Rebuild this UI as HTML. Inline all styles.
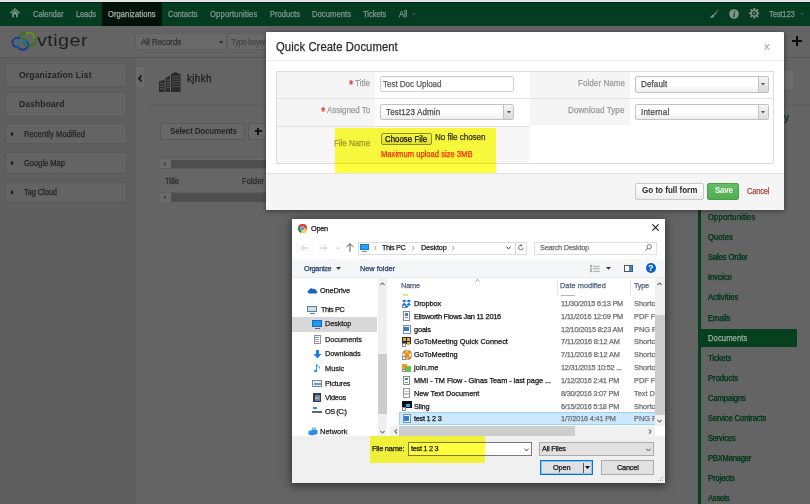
<!DOCTYPE html>
<html><head><meta charset="utf-8"><title>Quick Create Document</title>
<style>
html,body{margin:0;padding:0;}
body{width:810px;height:504px;overflow:hidden;position:relative;background:#646464;font-family:"Liberation Sans",Arial,sans-serif;}
div,span,svg{position:absolute;box-sizing:border-box;}
span{white-space:nowrap;line-height:1;-webkit-text-stroke:0.25px;transform-origin:0 0;}
#root{left:0;top:0;width:810px;height:504px;overflow:hidden;}
</style></head><body><div id="root">
<div style="left:0px;top:0px;width:810px;height:504px;background:#646464;"></div>
<div style="left:0px;top:0px;width:810px;height:2px;background:#e4e4e4;"></div>
<div style="left:0px;top:2px;width:810px;height:24px;background:#033c20;"></div>
<div style="left:0px;top:2px;width:810px;height:1px;background:#012812;"></div>
<div style="left:102px;top:2px;width:60px;height:24px;background:#01120a;"></div>
<span style="left:33.00px;top:11px;font-size:8.25px;color:#82988b;letter-spacing:-0.046px;transform:scaleX(0.92);">Calendar</span>
<span style="left:76.00px;top:11px;font-size:8.25px;color:#82988b;letter-spacing:-0.184px;transform:scaleX(0.92);">Leads</span>
<span style="left:167.50px;top:11px;font-size:8.25px;color:#82988b;letter-spacing:-0.070px;transform:scaleX(0.92);">Contacts</span>
<span style="left:210.00px;top:11px;font-size:8.25px;color:#82988b;letter-spacing:0.196px;transform:scaleX(0.92);">Opportunities</span>
<span style="left:270.00px;top:11px;font-size:8.25px;color:#82988b;letter-spacing:0.008px;transform:scaleX(0.92);">Products</span>
<span style="left:312.30px;top:11px;font-size:8.25px;color:#82988b;letter-spacing:0.084px;transform:scaleX(0.92);">Documents</span>
<span style="left:363.30px;top:11px;font-size:8.25px;color:#82988b;letter-spacing:-0.064px;transform:scaleX(0.92);">Tickets</span>
<span style="left:399.00px;top:11px;font-size:8.25px;color:#82988b;letter-spacing:-0.074px;transform:scaleX(0.92);">All</span>
<span style="left:108.00px;top:11px;font-size:8.25px;color:#a9b0ab;letter-spacing:0.061px;transform:scaleX(0.92);">Organizations</span>
<svg style="left:9.5px;top:7.5px;" width="10" height="10" viewBox="0 0 10 10"><path d="M5 1 L0.8 4.8 M5 1 L9.2 4.8" stroke="#7d9286" stroke-width="1.3" fill="none" stroke-linecap="round"/><path d="M2.2 5 L5 2.7 L7.8 5 V9.2 H6 V6.6 H4 V9.2 H2.2 Z" fill="#7d9286"/></svg>
<svg style="left:411.5px;top:13.2px;" width="4" height="2.4" viewBox="0 0 4 2.4"><path d="M0 0 H4 L2 2.4 Z" fill="#2c5a41"/></svg>
<svg style="left:709px;top:8px;" width="11" height="11" viewBox="0 0 11 11"><path d="M10 0.6 L4.6 6.4 L5.8 7.4 Z" fill="#7f9387"/><path d="M4.2 6.8 C2.6 6.6 2.6 8.6 0.8 9.6 C2.8 10.2 5 9.6 5.4 7.8 Z" fill="#7f9387"/></svg>
<svg style="left:729px;top:8.5px;" width="10" height="10" viewBox="0 0 10 10"><circle cx="5" cy="5" r="4.8" fill="#7f9387"/></svg>
<span style="left:732.60px;top:10px;font-size:9.25px;color:#033c20;font-weight:bold;-webkit-text-stroke:0;transform:scaleX(0.92);font-style:italic;font-family:'Liberation Serif',serif;">i</span>
<svg style="left:748.8px;top:8px;" width="10.6" height="10.6" viewBox="0 0 12 12"><rect x="4.9" y="0" width="2.2" height="12" rx="0.6" transform="rotate(0 6 6)" fill="#7f9387"/><rect x="4.9" y="0" width="2.2" height="12" rx="0.6" transform="rotate(45 6 6)" fill="#7f9387"/><rect x="4.9" y="0" width="2.2" height="12" rx="0.6" transform="rotate(90 6 6)" fill="#7f9387"/><rect x="4.9" y="0" width="2.2" height="12" rx="0.6" transform="rotate(135 6 6)" fill="#7f9387"/><circle cx="6" cy="6" r="4" fill="#7f9387"/><circle cx="6" cy="6" r="2.6" fill="#033c20"/><circle cx="6" cy="6" r="1.2" fill="#7f9387"/></svg>
<span style="left:769.30px;top:11px;font-size:8.25px;color:#82988b;letter-spacing:-0.160px;transform:scaleX(0.92);">Test123</span>
<svg style="left:799.5px;top:13.2px;" width="4" height="2.4" viewBox="0 0 4 2.4"><path d="M0 0 H4 L2 2.4 Z" fill="#2c5a41"/></svg>
<div style="left:0px;top:26px;width:810px;height:31.5px;background:#646464;"></div>
<div style="left:0px;top:57px;width:810px;height:1px;background:#565656;"></div>
<svg style="left:10.5px;top:31px;" width="25" height="20" viewBox="0 0 25 20"><path d="M8.6 7.6 C8 3 12.4 0.6 16 2.8 C19 0.2 24.2 2.6 23 7.6 C26 10.4 23.6 15 19.4 14 C16.6 14.4 13.4 13.4 11.6 11 C10.2 9 12.2 6.8 14.8 8.2" fill="none" stroke="#33761f" stroke-width="1.9" stroke-linecap="round"/><path d="M15.4 2.4 C18.4 0.6 23.4 2.2 23 7.2" fill="none" stroke="#6f8f1c" stroke-width="1.9" stroke-linecap="round"/><path d="M8.6 7.4 C4 5.4 -0.4 9.8 2.2 14 C3.4 15.8 5.6 16 6.8 15.6 C7.8 19.6 14.4 20 16.4 16 C17.4 14 16.8 12 15.4 10.4" fill="none" stroke="#183f88" stroke-width="1.9" stroke-linecap="round"/><path d="M6.6 15.4 C5.2 12 7.8 9 11 9.6 C13.6 10 15.8 12 16 14.4" fill="none" stroke="#2270b4" stroke-width="1.7" stroke-linecap="round"/></svg>
<span style="left:37.20px;top:32px;font-size:17px;color:#1e1e1e;letter-spacing:0.336px;transform:scaleX(1.17);-webkit-text-stroke:0;">vtiger</span>
<div style="left:135px;top:33px;width:91.5px;height:16.5px;background:#696969;border:1px solid #5d5d5d;border-radius:2px 0 0 2px;"></div>
<span style="left:140.80px;top:38px;font-size:9.0px;color:#333;letter-spacing:-0.232px;transform:scaleX(0.92);">All Records</span>
<svg style="left:218.5px;top:40.5px;" width="4.5" height="3" viewBox="0 0 4.5 3"><path d="M0 0 H4.5 L2.25 3 Z" fill="#333"/></svg>
<div style="left:226.5px;top:33px;width:60px;height:16.5px;background:#696969;border:1px solid #5d5d5d;"></div>
<span style="left:231.00px;top:38px;font-size:9.0px;color:#484848;letter-spacing:-0.627px;transform:scaleX(0.92);">Type keyw</span>
<div style="left:792px;top:39.7px;width:10px;height:2.7px;background:#0a0a0a;"></div>
<div style="left:795.6px;top:36px;width:2.7px;height:10px;background:#0a0a0a;"></div>
<div style="left:0px;top:58px;width:135.5px;height:446px;background:#5f5f5f;"></div>
<div style="left:5px;top:62.5px;width:121.5px;height:24.5px;background:#646464;border:1px solid #5a5a5a;border-radius:2px;"></div>
<div style="left:5px;top:92px;width:121.5px;height:24.5px;background:#646464;border:1px solid #5a5a5a;border-radius:2px;"></div>
<div style="left:5px;top:122.5px;width:121.5px;height:21.5px;background:#646464;border:1px solid #5a5a5a;border-radius:2px;"></div>
<div style="left:5px;top:152px;width:121.5px;height:21.5px;background:#646464;border:1px solid #5a5a5a;border-radius:2px;"></div>
<div style="left:5px;top:181.5px;width:121.5px;height:21.5px;background:#646464;border:1px solid #5a5a5a;border-radius:2px;"></div>
<span style="left:18.50px;top:71px;font-size:9.25px;color:#222;font-weight:bold;-webkit-text-stroke:0;letter-spacing:0.204px;transform:scaleX(0.92);">Organization List</span>
<span style="left:18.50px;top:100px;font-size:9.25px;color:#222;font-weight:bold;-webkit-text-stroke:0;letter-spacing:0.143px;transform:scaleX(0.92);">Dashboard</span>
<span style="left:24.00px;top:131px;font-size:8.25px;color:#262626;letter-spacing:0.046px;transform:scaleX(0.92);">Recently Modified</span>
<svg style="left:10.8px;top:131.5px;" width="3.4" height="4.4" viewBox="0 0 3.4 4.4"><path d="M0 0 L3.2 2.2 L0 4.4 Z" fill="#1c1c1c"/></svg>
<span style="left:24.00px;top:160px;font-size:8.25px;color:#262626;letter-spacing:-0.042px;transform:scaleX(0.92);">Google Map</span>
<svg style="left:10.8px;top:161.0px;" width="3.4" height="4.4" viewBox="0 0 3.4 4.4"><path d="M0 0 L3.2 2.2 L0 4.4 Z" fill="#1c1c1c"/></svg>
<span style="left:24.00px;top:189px;font-size:8.25px;color:#262626;letter-spacing:-0.160px;transform:scaleX(0.92);">Tag Cloud</span>
<svg style="left:10.8px;top:190.20000000000002px;" width="3.4" height="4.4" viewBox="0 0 3.4 4.4"><path d="M0 0 L3.2 2.2 L0 4.4 Z" fill="#1c1c1c"/></svg>
<div style="left:135.5px;top:58px;width:674.5px;height:446px;background:#646464;"></div>
<div style="left:135.5px;top:67px;width:8px;height:20px;background:#6a6a6a;"></div>
<svg style="left:137.5px;top:74.5px;" width="4" height="7" viewBox="0 0 4 7"><path d="M3.6 0.5 L0.8 3.5 L3.6 6.5" stroke="#111" stroke-width="1.6" fill="none"/></svg>
<svg style="left:159px;top:72px;" width="22" height="20" viewBox="0 0 22 20"><path d="M0 20 V9.5 L5.5 7.5 V20 Z M6.5 20 V6 L11 3.6 V20 Z M12 20 V2 L16.5 0 L21.5 2.2 V20 Z" fill="#2b2b2b"/><rect x="1.2" y="11" width="1.1" height="1.3" fill="#646464"/><rect x="1.2" y="13.5" width="1.1" height="1.3" fill="#646464"/><rect x="1.2" y="16" width="1.1" height="1.3" fill="#646464"/><rect x="3.2" y="11" width="1.1" height="1.3" fill="#646464"/><rect x="3.2" y="13.5" width="1.1" height="1.3" fill="#646464"/><rect x="3.2" y="16" width="1.1" height="1.3" fill="#646464"/><rect x="7.6" y="7.5" width="1" height="1.3" fill="#646464"/><rect x="7.6" y="10" width="1" height="1.3" fill="#646464"/><rect x="7.6" y="12.5" width="1" height="1.3" fill="#646464"/><rect x="7.6" y="15" width="1" height="1.3" fill="#646464"/><rect x="9.3" y="7.5" width="1" height="1.3" fill="#646464"/><rect x="9.3" y="10" width="1" height="1.3" fill="#646464"/><rect x="9.3" y="12.5" width="1" height="1.3" fill="#646464"/><rect x="9.3" y="15" width="1" height="1.3" fill="#646464"/><rect x="13.4" y="4" width="1" height="1.3" fill="#646464"/><rect x="13.4" y="6.5" width="1" height="1.3" fill="#646464"/><rect x="13.4" y="9" width="1" height="1.3" fill="#646464"/><rect x="13.4" y="11.5" width="1" height="1.3" fill="#646464"/><rect x="13.4" y="14" width="1" height="1.3" fill="#646464"/><rect x="15.4" y="4" width="1" height="1.3" fill="#646464"/><rect x="15.4" y="6.5" width="1" height="1.3" fill="#646464"/><rect x="15.4" y="9" width="1" height="1.3" fill="#646464"/><rect x="15.4" y="11.5" width="1" height="1.3" fill="#646464"/><rect x="15.4" y="14" width="1" height="1.3" fill="#646464"/><rect x="17.4" y="4" width="1" height="1.3" fill="#646464"/><rect x="17.4" y="6.5" width="1" height="1.3" fill="#646464"/><rect x="17.4" y="9" width="1" height="1.3" fill="#646464"/><rect x="17.4" y="11.5" width="1" height="1.3" fill="#646464"/><rect x="17.4" y="14" width="1" height="1.3" fill="#646464"/><rect x="19.4" y="4" width="1" height="1.3" fill="#646464"/><rect x="19.4" y="6.5" width="1" height="1.3" fill="#646464"/><rect x="19.4" y="9" width="1" height="1.3" fill="#646464"/><rect x="19.4" y="11.5" width="1" height="1.3" fill="#646464"/><rect x="19.4" y="14" width="1" height="1.3" fill="#646464"/></svg>
<span style="left:186.80px;top:73px;font-size:10.75px;color:#1a1a1a;letter-spacing:0.384px;transform:scaleX(0.92);">kjhkh</span>
<div style="left:150px;top:104.5px;width:660px;height:1px;background:#5c5c5c;"></div>
<div style="left:160px;top:123px;width:84.5px;height:16.5px;background:#686868;border:1px solid #585858;border-radius:2px;"></div>
<span style="left:170.00px;top:127px;font-size:8.75px;color:#262626;font-weight:bold;-webkit-text-stroke:0;letter-spacing:-0.195px;transform:scaleX(0.92);">Select Documents</span>
<div style="left:247.5px;top:123px;width:30px;height:16.5px;background:#686868;border:1px solid #585858;border-radius:2px;"></div>
<div style="left:254.6px;top:130.1px;width:7.4px;height:2px;background:#111;"></div>
<div style="left:257.3px;top:127.6px;width:2px;height:7px;background:#111;"></div>
<div style="left:160px;top:159.3px;width:200px;height:8.7px;background:#6b6b6b;"></div>
<div style="left:170.5px;top:159.5px;width:180px;height:8.5px;background:#4f4f4f;"></div>
<svg style="left:162.5px;top:161.8px;" width="3" height="4" viewBox="0 0 3 4"><path d="M3 0 L0 2 L3 4 Z" fill="#444"/></svg>
<div style="left:160px;top:168px;width:200px;height:25px;background:#666;border:1px solid #5e5e5e;border-left:none;border-right:none;"></div>
<span style="left:165.00px;top:178px;font-size:8.25px;color:#2a2a2a;letter-spacing:-0.015px;transform:scaleX(0.92);">Title</span>
<span style="left:241.50px;top:178px;font-size:8.25px;color:#2a2a2a;letter-spacing:0.106px;transform:scaleX(0.92);">Folder</span>
<div style="left:160px;top:193px;width:200px;height:8.7px;background:#6b6b6b;"></div>
<div style="left:170.5px;top:193px;width:180px;height:8.5px;background:#4f4f4f;"></div>
<svg style="left:162.5px;top:195.4px;" width="3" height="4" viewBox="0 0 3 4"><path d="M3 0 L0 2 L3 4 Z" fill="#444"/></svg>
<div style="left:784px;top:71px;width:9px;height:17.5px;background:#6c6c6c;"></div>
<div style="left:784px;top:105px;width:26px;height:1px;background:#5c5c5c;"></div>
<span style="left:784.30px;top:113px;font-size:10.25px;color:#04421f;font-weight:bold;-webkit-text-stroke:0;transform:scaleX(0.92);">y</span>
<div style="left:698.2px;top:205px;width:2.8px;height:299px;background:#05401f;"></div>
<div style="left:700.9px;top:328.7px;width:96px;height:18px;background:#05401f;"></div>
<span style="left:707.70px;top:214px;font-size:8.25px;color:#063d1e;letter-spacing:0.196px;transform:scaleX(0.92);text-shadow:0 0 0.4px #063d1e;">Opportunities</span>
<span style="left:707.70px;top:234px;font-size:8.25px;color:#063d1e;letter-spacing:0.072px;transform:scaleX(0.92);text-shadow:0 0 0.4px #063d1e;">Quotes</span>
<span style="left:707.70px;top:254px;font-size:8.25px;color:#063d1e;letter-spacing:-0.097px;transform:scaleX(0.92);text-shadow:0 0 0.4px #063d1e;">Sales Order</span>
<span style="left:707.70px;top:274px;font-size:8.25px;color:#063d1e;letter-spacing:-0.027px;transform:scaleX(0.92);text-shadow:0 0 0.4px #063d1e;">Invoice</span>
<span style="left:707.70px;top:294px;font-size:8.25px;color:#063d1e;letter-spacing:0.043px;transform:scaleX(0.92);text-shadow:0 0 0.4px #063d1e;">Activities</span>
<span style="left:707.70px;top:315px;font-size:8.25px;color:#063d1e;letter-spacing:-0.103px;transform:scaleX(0.92);text-shadow:0 0 0.4px #063d1e;">Emails</span>
<span style="left:707.70px;top:335px;font-size:8.25px;color:#9fb0a6;letter-spacing:0.124px;transform:scaleX(0.92);">Documents</span>
<span style="left:707.70px;top:355px;font-size:8.25px;color:#063d1e;letter-spacing:-0.083px;transform:scaleX(0.92);text-shadow:0 0 0.4px #063d1e;">Tickets</span>
<span style="left:707.70px;top:375px;font-size:8.25px;color:#063d1e;letter-spacing:0.023px;transform:scaleX(0.92);text-shadow:0 0 0.4px #063d1e;">Products</span>
<span style="left:707.70px;top:395px;font-size:8.25px;color:#063d1e;letter-spacing:-0.066px;transform:scaleX(0.92);text-shadow:0 0 0.4px #063d1e;">Campaigns</span>
<span style="left:707.70px;top:415px;font-size:8.25px;color:#063d1e;letter-spacing:-0.108px;transform:scaleX(0.92);text-shadow:0 0 0.4px #063d1e;">Service Contracts</span>
<span style="left:707.70px;top:435px;font-size:8.25px;color:#063d1e;letter-spacing:-0.249px;transform:scaleX(0.92);text-shadow:0 0 0.4px #063d1e;">Services</span>
<span style="left:707.70px;top:455px;font-size:8.25px;color:#063d1e;letter-spacing:-0.222px;transform:scaleX(0.92);text-shadow:0 0 0.4px #063d1e;">PBXManager</span>
<span style="left:707.70px;top:475px;font-size:8.25px;color:#063d1e;letter-spacing:-0.096px;transform:scaleX(0.92);text-shadow:0 0 0.4px #063d1e;">Projects</span>
<span style="left:707.70px;top:495px;font-size:8.25px;color:#063d1e;letter-spacing:-0.256px;transform:scaleX(0.92);text-shadow:0 0 0.4px #063d1e;">Assets</span>
<div style="left:266px;top:32.3px;width:517.7px;height:177.7px;background:#fff;box-shadow:0 1px 5px rgba(0,0,0,0.45);border-radius:1px;"></div>
<span style="left:275.80px;top:41px;font-size:12.25px;color:#2c2c2c;letter-spacing:0.079px;transform:scaleX(0.92);">Quick Create Document</span>
<span style="left:764.00px;top:41px;font-size:11.5px;color:#b5b5b5;font-weight:bold;-webkit-text-stroke:0;transform:scaleX(0.92);">x</span>
<div style="left:266px;top:60px;width:517.7px;height:1px;background:#e9e9e9;"></div>
<div style="left:266px;top:173px;width:517.7px;height:37px;background:#f5f5f5;border-top:1px solid #e2e2e2;"></div>
<div style="left:275.5px;top:70.5px;width:498.8px;height:93.3px;background:#fff;border:1px solid #dddddd;"></div>
<div style="left:276.5px;top:71.5px;width:98.5px;height:26.5px;background:#f5f5f5;"></div>
<div style="left:276.5px;top:99px;width:98.5px;height:26.5px;background:#f5f5f5;"></div>
<div style="left:276.5px;top:126.5px;width:253.5px;height:36.3px;background:#f7f7f7;"></div>
<div style="left:530px;top:71.5px;width:100px;height:26.5px;background:#f5f5f5;"></div>
<div style="left:530px;top:99px;width:100px;height:26px;background:#f5f5f5;"></div>
<div style="left:276.5px;top:98px;width:496.8px;height:1px;background:#e2e2e2;"></div>
<div style="left:276.5px;top:125.5px;width:253.5px;height:1px;background:#e2e2e2;"></div>
<span style="left:348.60px;top:79px;font-size:12.0px;color:#e8262c;transform:scaleX(0.92);">*</span>
<span style="left:355.00px;top:79px;font-size:8.75px;color:#9a9a9a;letter-spacing:0.025px;transform:scaleX(0.92);">Title</span>
<span style="left:320.60px;top:106px;font-size:12.0px;color:#e8262c;transform:scaleX(0.92);">*</span>
<span style="left:326.80px;top:106px;font-size:8.75px;color:#9a9a9a;letter-spacing:-0.055px;transform:scaleX(0.92);">Assigned To</span>
<span style="left:333.80px;top:139px;font-size:8.75px;color:#9a9a9a;letter-spacing:-0.065px;transform:scaleX(0.92);">File Name</span>
<span style="left:577.80px;top:79px;font-size:8.75px;color:#9a9a9a;letter-spacing:0.052px;transform:scaleX(0.92);">Folder Name</span>
<span style="left:568.40px;top:106px;font-size:8.75px;color:#9a9a9a;letter-spacing:0.096px;transform:scaleX(0.92);">Download Type</span>
<div style="left:380px;top:76.2px;width:134.3px;height:16.2px;background:#fff;border:1px solid #d2d2d2;border-radius:2px;box-shadow:inset 0 1px 1px rgba(0,0,0,0.06);"></div>
<span style="left:383.30px;top:80px;font-size:8.75px;color:#5a5a5a;letter-spacing:-0.043px;transform:scaleX(0.92);">Test Doc Upload</span>
<div style="left:380px;top:103.5px;width:134.3px;height:16.3px;border:1px solid #c2c2c2;border-radius:2px;background:linear-gradient(#fff 0%,#fff 50%,#eeeeee 100%);"></div>
<div style="left:503.09999999999997px;top:104.5px;width:10.2px;height:14.3px;border-left:1px solid #c2c2c2;background:linear-gradient(#f4f4f4,#dadada);border-radius:0 2px 2px 0;"></div>
<svg style="left:506.69999999999993px;top:110.65px;" width="4" height="3" viewBox="0 0 4 3"><path d="M0 0 H4 L2 2.6 Z" fill="#555"/></svg>
<span style="left:385.80px;top:108px;font-size:8.75px;color:#4a4a4a;letter-spacing:0.127px;transform:scaleX(0.92);">Test123 Admin</span>
<div style="left:634.5px;top:76px;width:134.3px;height:16.5px;border:1px solid #c2c2c2;border-radius:2px;background:linear-gradient(#fff 0%,#fff 50%,#eeeeee 100%);"></div>
<div style="left:757.5999999999999px;top:77px;width:10.2px;height:14.5px;border-left:1px solid #c2c2c2;background:linear-gradient(#f4f4f4,#dadada);border-radius:0 2px 2px 0;"></div>
<svg style="left:761.1999999999999px;top:83.25px;" width="4" height="3" viewBox="0 0 4 3"><path d="M0 0 H4 L2 2.6 Z" fill="#555"/></svg>
<span style="left:640.80px;top:80px;font-size:8.75px;color:#4a4a4a;letter-spacing:0.126px;transform:scaleX(0.92);">Default</span>
<div style="left:634.5px;top:103.5px;width:134.3px;height:16.5px;border:1px solid #c2c2c2;border-radius:2px;background:linear-gradient(#fff 0%,#fff 50%,#eeeeee 100%);"></div>
<div style="left:757.5999999999999px;top:104.5px;width:10.2px;height:14.5px;border-left:1px solid #c2c2c2;background:linear-gradient(#f4f4f4,#dadada);border-radius:0 2px 2px 0;"></div>
<svg style="left:761.1999999999999px;top:110.75px;" width="4" height="3" viewBox="0 0 4 3"><path d="M0 0 H4 L2 2.6 Z" fill="#555"/></svg>
<span style="left:640.80px;top:108px;font-size:8.75px;color:#4a4a4a;letter-spacing:0.210px;transform:scaleX(0.92);">Internal</span>
<div style="left:380.5px;top:132.6px;width:51.3px;height:12.8px;border:1px solid #8a8a8a;border-radius:2px;background:linear-gradient(#f6f6f6,#dedede);"></div>
<span style="left:385.20px;top:135px;font-size:8.5px;color:#111;letter-spacing:0.041px;transform:scaleX(0.92);">Choose File</span>
<span style="left:434.50px;top:133px;font-size:8.75px;color:#333;letter-spacing:-0.043px;transform:scaleX(0.92);">No file chosen</span>
<span style="left:380.50px;top:151px;font-size:8.25px;color:#ff2a10;letter-spacing:0.019px;transform:scaleX(0.92);">Maximum upload size 3MB</span>
<div style="left:635.3px;top:182.8px;width:69px;height:16.8px;border:1px solid #c9c9c9;border-radius:2px;background:linear-gradient(#fff,#ececec);"></div>
<span style="left:642.00px;top:186px;font-size:8.75px;color:#2b2b2b;font-weight:bold;-webkit-text-stroke:0;letter-spacing:-0.003px;transform:scaleX(0.92);">Go to full form</span>
<div style="left:707.3px;top:182.8px;width:31.8px;height:16.8px;border:1px solid #4a9f4a;border-radius:2px;background:linear-gradient(#62c062,#50ad50);"></div>
<span style="left:714.70px;top:186px;font-size:8.5px;color:#fff;font-weight:bold;-webkit-text-stroke:0;letter-spacing:-0.167px;transform:scaleX(0.92);">Save</span>
<span style="left:746.90px;top:188px;font-size:8.25px;color:#b3413f;letter-spacing:-0.245px;transform:scaleX(0.92);">Cancel</span>
<div style="left:292.4px;top:219px;width:372.4px;height:263.7px;background:#fff;box-shadow:0 2px 9px 1px rgba(0,0,0,0.5);"></div>
<div style="left:292.4px;top:435.8px;width:372.4px;height:46.89999999999998px;background:#f0f0f0;"></div>
<svg style="left:298px;top:223.8px;" width="9" height="9" viewBox="0 0 9 9"><circle cx="4.5" cy="4.5" r="4.5" fill="#db4437"/><path d="M4.5 4.5 L0.6 2.2 A4.5 4.5 0 0 0 2.9 8.7 Z" fill="#0f9d58"/><path d="M4.5 4.5 L2.9 8.7 A4.5 4.5 0 0 0 9 4.5 Z" fill="#ffcd40"/><path d="M4.5 4.5 L9 4.5 A4.5 4.5 0 0 0 0.6 2.2 Z" fill="#db4437"/><circle cx="4.5" cy="4.5" r="2.1" fill="#fff"/><circle cx="4.5" cy="4.5" r="1.6" fill="#4285f4"/></svg>
<span style="left:310.80px;top:225px;font-size:8.0px;color:#111;letter-spacing:-0.291px;transform:scaleX(0.92);">Open</span>
<svg style="left:652px;top:224.2px;" width="7" height="7" viewBox="0 0 7 7"><path d="M0.4 0.4 L6.6 6.6 M6.6 0.4 L0.4 6.6" stroke="#1a1a1a" stroke-width="1.1"/></svg>
<svg style="left:300.5px;top:245px;" width="8" height="6" viewBox="0 0 8 6"><path d="M3.2 0.4 L0.6 3 L3.2 5.6 M0.6 3 H7.6" stroke="#c4c4c4" stroke-width="0.9" fill="none"/></svg>
<svg style="left:318.5px;top:245px;" width="8" height="6" viewBox="0 0 8 6"><path d="M4.8 0.4 L7.4 3 L4.8 5.6 M7.4 3 H0.4" stroke="#c4c4c4" stroke-width="0.9" fill="none"/></svg>
<svg style="left:335.5px;top:246.8px;" width="4" height="3" viewBox="0 0 4 3"><path d="M0.3 0.4 L2 2.2 L3.7 0.4" stroke="#bbb" stroke-width="0.8" fill="none"/></svg>
<svg style="left:346px;top:243px;" width="8" height="9" viewBox="0 0 8 9"><path d="M0.6 4 L4 0.7 L7.4 4 M4 0.7 V8.8" stroke="#555" stroke-width="1" fill="none"/></svg>
<div style="left:357.5px;top:241.5px;width:169px;height:13px;background:#fff;border:1px solid #dcdcdc;"></div>
<div style="left:514.5px;top:241.5px;width:1px;height:13px;background:#d9d9d9;"></div>
<div style="left:359.5px;top:243.8px;width:9.2px;height:6.6px;background:#2a9df4;border:1px solid #1679c9;"></div>
<div style="left:361.5px;top:251px;width:5.2px;height:0.9px;background:#7d8a96;"></div>
<svg style="left:373.5px;top:246.0px;" width="3" height="5" viewBox="0 0 3 5"><path d="M0.4 0.4 L2.2 2.1 L0.4 3.8" stroke="#777" stroke-width="0.8" fill="none"/></svg>
<svg style="left:412.3px;top:246.0px;" width="3" height="5" viewBox="0 0 3 5"><path d="M0.4 0.4 L2.2 2.1 L0.4 3.8" stroke="#777" stroke-width="0.8" fill="none"/></svg>
<svg style="left:452.3px;top:246.0px;" width="3" height="5" viewBox="0 0 3 5"><path d="M0.4 0.4 L2.2 2.1 L0.4 3.8" stroke="#777" stroke-width="0.8" fill="none"/></svg>
<span style="left:382.00px;top:244px;font-size:8.0px;color:#222;letter-spacing:-0.430px;transform:scaleX(0.92);">This PC</span>
<span style="left:420.50px;top:244px;font-size:8.0px;color:#222;letter-spacing:-0.217px;transform:scaleX(0.92);">Desktop</span>
<svg style="left:505.5px;top:246px;" width="5" height="4" viewBox="0 0 5 4"><path d="M0.4 0.5 L2.5 3 L4.6 0.5" stroke="#444" stroke-width="1" fill="none"/></svg>
<svg style="left:517.5px;top:244.3px;" width="6" height="7" viewBox="0 0 6 7"><path d="M5.2 3.6 A2.3 2.3 0 1 1 3.6 1.4" stroke="#555" stroke-width="0.8" fill="none"/><path d="M2.6 0 L4.6 1.3 L2.8 2.8 Z" fill="#555"/></svg>
<div style="left:534.3px;top:241.5px;width:122.4px;height:13px;background:#fff;border:1px solid #e0e0e0;"></div>
<span style="left:539.50px;top:244px;font-size:8.0px;color:#707070;letter-spacing:-0.264px;transform:scaleX(0.92);">Search Desktop</span>
<svg style="left:645px;top:244.4px;" width="7" height="7" viewBox="0 0 7 7"><circle cx="4.2" cy="2.8" r="2.2" stroke="#555" stroke-width="0.8" fill="none"/><path d="M2.6 4.4 L0.5 6.5" stroke="#555" stroke-width="1"/></svg>
<div style="left:292.4px;top:259.3px;width:372.4px;height:18px;background:#f5f6f7;"></div>
<div style="left:292.4px;top:277.3px;width:372.4px;height:0.7px;background:#eaebec;"></div>
<span style="left:304.30px;top:265px;font-size:8.0px;color:#1f3a6b;letter-spacing:-0.336px;transform:scaleX(0.92);">Organize</span>
<svg style="left:335.6px;top:267.3px;" width="5" height="3" viewBox="0 0 5 3"><path d="M0 0 H5 L2.5 2.8 Z" fill="#333"/></svg>
<span style="left:359.50px;top:265px;font-size:8.0px;color:#1f3a6b;letter-spacing:-0.021px;transform:scaleX(0.92);">New folder</span>
<svg style="left:590px;top:264.5px;" width="10" height="8" viewBox="0 0 10 8"><rect x="0.3" y="0.5" width="1.6" height="1.4" fill="none" stroke="#777" stroke-width="0.4"/><rect x="3.2" y="0.9" width="6.5" height="0.7" fill="#888"/><rect x="0.3" y="3" width="1.6" height="1.4" fill="none" stroke="#777" stroke-width="0.4"/><rect x="3.2" y="3.4" width="6.5" height="0.7" fill="#888"/><rect x="0.3" y="5.5" width="1.6" height="1.4" fill="none" stroke="#777" stroke-width="0.4"/><rect x="3.2" y="5.9" width="6.5" height="0.7" fill="#888"/></svg>
<svg style="left:606px;top:267.3px;" width="5" height="3" viewBox="0 0 5 3"><path d="M0 0 H5 L2.5 2.8 Z" fill="#333"/></svg>
<div style="left:623.5px;top:264.6px;width:9.8px;height:7px;background:#fff;border:1px solid #555;"></div>
<div style="left:629px;top:265.6px;width:3.3px;height:5px;background:#2a8de0;"></div>
<svg style="left:645.6px;top:263px;" width="10" height="10" viewBox="0 0 10 10"><circle cx="5" cy="5" r="5" fill="#0f5fc4"/></svg>
<span style="left:648.20px;top:263px;font-size:9.75px;color:#fff;font-weight:bold;-webkit-text-stroke:0;transform:scaleX(0.92);">?</span>
<div style="left:292.4px;top:317px;width:85px;height:15px;background:#d9d9d9;"></div>
<span style="left:320.00px;top:287px;font-size:8.0px;color:#1a1a1a;letter-spacing:-0.168px;transform:scaleX(0.92);">OneDrive</span>
<span style="left:320.50px;top:306px;font-size:8.0px;color:#1a1a1a;letter-spacing:-0.430px;transform:scaleX(0.92);">This PC</span>
<span style="left:325.00px;top:320px;font-size:8.0px;color:#1a1a1a;letter-spacing:-0.127px;transform:scaleX(0.92);">Desktop</span>
<span style="left:325.00px;top:336px;font-size:8.0px;color:#1a1a1a;letter-spacing:-0.030px;transform:scaleX(0.92);">Documents</span>
<span style="left:325.00px;top:350px;font-size:8.0px;color:#1a1a1a;letter-spacing:-0.083px;transform:scaleX(0.92);">Downloads</span>
<span style="left:325.00px;top:365px;font-size:8.0px;color:#1a1a1a;letter-spacing:0.022px;transform:scaleX(0.92);">Music</span>
<span style="left:325.00px;top:380px;font-size:8.0px;color:#1a1a1a;letter-spacing:-0.169px;transform:scaleX(0.92);">Pictures</span>
<span style="left:325.00px;top:394px;font-size:8.0px;color:#1a1a1a;letter-spacing:-0.233px;transform:scaleX(0.92);">Videos</span>
<span style="left:325.00px;top:408px;font-size:8.0px;color:#1a1a1a;letter-spacing:-0.533px;transform:scaleX(0.92);">OS (C:)</span>
<span style="left:320.00px;top:428px;font-size:8.0px;color:#1a1a1a;letter-spacing:0.092px;transform:scaleX(0.92);">Network</span>
<svg style="left:307px;top:287px;" width="11" height="7" viewBox="0 0 11 7"><path d="M2.6 6.4 C0 6.4 0 3.4 2.2 3.2 C2.4 1.2 5 0.6 6 2.2 C7 1.4 8.8 2 8.8 3.6 C10.8 3.6 10.8 6.4 9 6.4 Z" fill="#1666c0"/></svg>
<div style="left:307.3px;top:305.6px;width:9.4px;height:6.2px;background:#bfe3fb;border:1px solid #6a7a86;"></div>
<div style="left:309.5px;top:312.6px;width:5px;height:0.9px;background:#6a7a86;"></div>
<div style="left:312px;top:320.3px;width:10px;height:7px;background:#1e98f2;border:1px solid #0f6cc0;"></div>
<div style="left:314.5px;top:327.8px;width:5px;height:0.8px;background:#5a6a76;"></div>
<div style="left:313.5px;top:335px;width:7px;height:8.6px;background:#fff;border:1px solid #8a949c;"></div>
<div style="left:315px;top:337px;width:4px;height:0.8px;background:#5b9bd5;"></div>
<div style="left:315px;top:339px;width:4px;height:0.6px;background:#aaa;"></div>
<div style="left:315px;top:340.6px;width:4px;height:0.6px;background:#aaa;"></div>
<svg style="left:312.5px;top:349.5px;" width="9" height="9" viewBox="0 0 9 9"><path d="M3 0 H6 V4 H8.6 L4.5 8.6 L0.4 4 H3 Z" fill="#1e7fe0"/></svg>
<svg style="left:314px;top:363.5px;" width="7" height="9" viewBox="0 0 7 9"><path d="M2.6 0.3 V6.6" stroke="#1e8fe8" stroke-width="1"/><path d="M2.6 0.3 C3.4 2 5.8 2 5.6 4.4" stroke="#1e8fe8" stroke-width="1" fill="none"/><ellipse cx="1.7" cy="7" rx="1.6" ry="1.2" fill="#1e8fe8"/></svg>
<div style="left:312.3px;top:379.5px;width:9.6px;height:7px;background:#e6eef5;border:1px solid #7d8994;"></div>
<div style="left:313.6px;top:382.6px;width:7px;height:2.6px;background:#5aa2d8;"></div>
<div style="left:313px;top:393.2px;width:8.4px;height:9px;background:#3b3b3b;"></div>
<div style="left:314.6px;top:394.6px;width:5.2px;height:6.2px;background:#4a8ad8;"></div>
<div style="left:315.4px;top:397px;width:3.4px;height:2.4px;background:#e0a040;"></div>
<div style="left:312.3px;top:410.8px;width:9.4px;height:2.6px;background:#9aa4ac;border:1px solid #5e6870;"></div>
<div style="left:313.4px;top:406.5px;width:3.4px;height:2.8px;background:#1e98f2;"></div>
<svg style="left:308px;top:427px;" width="10" height="9" viewBox="0 0 10 9"><path d="M0.5 4 L6 2.4 L9.5 3.2 V7 L4 8.6 L0.5 7.6 Z" fill="#2a8fe4"/><path d="M4 0.5 H8 V3 H4 Z" fill="#7cc0f4"/></svg>
<div style="left:378px;top:278px;width:9.2px;height:157.8px;background:#f0f0f0;"></div>
<div style="left:378px;top:353.8px;width:9.2px;height:60.5px;background:#cdcdcd;"></div>
<svg style="left:380px;top:281.5px;" width="5" height="4" viewBox="0 0 5 4"><path d="M0.4 3.2 L2.5 0.8 L4.6 3.2" stroke="#444" stroke-width="1" fill="none"/></svg>
<svg style="left:380px;top:429.5px;" width="5" height="4" viewBox="0 0 5 4"><path d="M0.4 0.8 L2.5 3.2 L4.6 0.8" stroke="#444" stroke-width="1" fill="none"/></svg>
<span style="left:400.80px;top:282px;font-size:8.0px;color:#4c607a;letter-spacing:-0.156px;transform:scaleX(0.92);">Name</span>
<span style="left:560.20px;top:282px;font-size:8.0px;color:#4c607a;letter-spacing:0.036px;transform:scaleX(0.92);">Date modified</span>
<span style="left:633.90px;top:282px;font-size:8.0px;color:#4c607a;letter-spacing:-0.310px;transform:scaleX(0.92);">Type</span>
<div style="left:556.9px;top:280px;width:0.8px;height:15px;background:#e5e5e5;"></div>
<div style="left:630px;top:280px;width:0.8px;height:15px;background:#e5e5e5;"></div>
<svg style="left:474.5px;top:278.6px;" width="5" height="3" viewBox="0 0 5 3"><path d="M0.4 2.6 L2.5 0.5 L4.6 2.6" stroke="#777" stroke-width="0.7" fill="none"/></svg>
<div style="left:398.8px;top:412.2px;width:255.8px;height:13.2px;background:#cce8ff;border:1px solid #99d1ff;border-right:none;"></div>
<span style="left:413.60px;top:300px;font-size:8.0px;color:#111;letter-spacing:-0.112px;transform:scaleX(0.92);">Dropbox</span>
<span style="left:560.60px;top:300px;font-size:8.0px;color:#6d6d6d;letter-spacing:-0.226px;transform:scaleX(0.92);">11/30/2015 6:13 PM</span>
<span style="left:633.90px;top:300px;font-size:8.0px;color:#6d6d6d;transform:scaleX(0.92);">Shortc</span>
<svg style="left:402px;top:298.59999999999997px;" width="9" height="10" viewBox="0 0 9 10"><path d="M2.2 0.4 L4.5 2 L2.2 3.6 L0 2 Z M6.8 0.4 L9 2 L6.8 3.6 L4.5 2 Z M2.2 3.8 L4.5 5.4 L2.2 7 L0 5.4 Z M6.8 3.8 L9 5.4 L6.8 7 L4.5 5.4 Z M4.5 6 L6.6 7.6 L4.5 9.2 L2.4 7.6 Z" fill="#1e78e0"/></svg>
<div style="left:402px;top:304.59999999999997px;width:3.6px;height:3.6px;background:#fff;border:0.5px solid #88a;"></div>
<span style="left:413.60px;top:313px;font-size:8.0px;color:#111;letter-spacing:-0.248px;transform:scaleX(0.92);">Ellsworth Flows Jan 11 2016</span>
<span style="left:560.60px;top:313px;font-size:8.0px;color:#6d6d6d;letter-spacing:-0.226px;transform:scaleX(0.92);">1/11/2016 12:09 PM</span>
<span style="left:633.90px;top:313px;font-size:8.0px;color:#6d6d6d;transform:scaleX(0.92);">PDF Fi</span>
<div style="left:403px;top:311.42999999999995px;width:7px;height:9.4px;background:#fff;border:1px solid #8a8a8a;"></div>
<div style="left:404.6px;top:313.42999999999995px;width:3.6px;height:2.6px;background:#3a7fc8;"></div>
<div style="left:404.6px;top:317.42999999999995px;width:3.6px;height:0.8px;background:#888;"></div>
<span style="left:413.60px;top:326px;font-size:8.0px;color:#111;letter-spacing:-0.161px;transform:scaleX(0.92);">goals</span>
<span style="left:560.60px;top:326px;font-size:8.0px;color:#6d6d6d;letter-spacing:-0.222px;transform:scaleX(0.92);">12/10/2015 8:23 AM</span>
<span style="left:633.90px;top:326px;font-size:8.0px;color:#6d6d6d;transform:scaleX(0.92);">PNG F</span>
<div style="left:402.6px;top:324.65999999999997px;width:8px;height:9px;background:#fff;border:1px solid #7a8fa8;"></div>
<div style="left:404.2px;top:326.65999999999997px;width:4.8px;height:4.2px;background:#2a7fd8;"></div>
<span style="left:413.60px;top:338px;font-size:8.0px;color:#111;letter-spacing:-0.008px;transform:scaleX(0.92);">GoToMeeting Quick Connect</span>
<span style="left:560.60px;top:338px;font-size:8.0px;color:#6d6d6d;letter-spacing:-0.166px;transform:scaleX(0.92);">7/11/2016 8:12 AM</span>
<span style="left:633.90px;top:338px;font-size:8.0px;color:#6d6d6d;transform:scaleX(0.92);">Shortc</span>
<div style="left:402px;top:337.09px;width:9.4px;height:7.25px;background:#1d2a5a;"></div>
<div style="left:403.2px;top:338.09px;width:3px;height:3px;background:#f2a81e;"></div>
<div style="left:407px;top:338.09px;width:3px;height:3px;background:#f2a81e;"></div>
<div style="left:407px;top:342.09px;width:3px;height:3px;background:#f2a81e;"></div>
<div style="left:402px;top:343.09px;width:3.6px;height:3.6px;background:#fff;border:0.5px solid #88a;"></div>
<span style="left:413.60px;top:351px;font-size:8.0px;color:#111;letter-spacing:-0.019px;transform:scaleX(0.92);">GoToMeeting</span>
<span style="left:560.60px;top:351px;font-size:8.0px;color:#6d6d6d;letter-spacing:-0.166px;transform:scaleX(0.92);">7/11/2016 8:12 AM</span>
<span style="left:633.90px;top:351px;font-size:8.0px;color:#6d6d6d;transform:scaleX(0.92);">Shortc</span>
<svg style="left:402px;top:349.91999999999996px;" width="10" height="10" viewBox="0 0 10 10"><circle cx="3" cy="2.6" r="2" fill="#f0a020"/><circle cx="7" cy="2.6" r="2" fill="#f0a020"/><circle cx="5" cy="5.2" r="2" fill="#e08a10"/><circle cx="3" cy="7.6" r="2" fill="#f0a020"/><circle cx="7" cy="7.6" r="2" fill="#f0a020"/><circle cx="5" cy="5" r="4.8" fill="none" stroke="#5a4a2a" stroke-width="0.5"/></svg>
<div style="left:402px;top:355.91999999999996px;width:3.6px;height:3.6px;background:#fff;border:0.5px solid #88a;"></div>
<span style="left:413.60px;top:364px;font-size:8.0px;color:#111;letter-spacing:0.122px;transform:scaleX(0.92);">join.me</span>
<span style="left:560.60px;top:364px;font-size:8.0px;color:#6d6d6d;letter-spacing:-0.267px;transform:scaleX(0.92);">12/31/2015 10:52 ...</span>
<span style="left:633.90px;top:364px;font-size:8.0px;color:#6d6d6d;transform:scaleX(0.92);">Shortc</span>
<div style="left:402px;top:364.1499999999999px;width:5.4px;height:4.4px;background:#f79a1c;"></div>
<div style="left:405px;top:366.34999999999997px;width:6.4px;height:5.6px;background:#6cc04a;"></div>
<div style="left:402px;top:368.74999999999994px;width:3.6px;height:3.6px;background:#fff;border:0.5px solid #88a;"></div>
<span style="left:413.60px;top:377px;font-size:8.0px;color:#111;letter-spacing:-0.058px;transform:scaleX(0.92);">MMI - TM Flow - Ginas Team - last page ...</span>
<span style="left:560.60px;top:377px;font-size:8.0px;color:#6d6d6d;letter-spacing:-0.264px;transform:scaleX(0.92);">1/12/2016 2:41 PM</span>
<span style="left:633.90px;top:377px;font-size:8.0px;color:#6d6d6d;transform:scaleX(0.92);">PDF Fi</span>
<div style="left:403px;top:375.58px;width:7px;height:9.4px;background:#fff;border:1px solid #8a8a8a;"></div>
<div style="left:404.6px;top:377.58px;width:3.6px;height:2.6px;background:#3a7fc8;"></div>
<div style="left:404.6px;top:381.58px;width:3.6px;height:0.8px;background:#888;"></div>
<span style="left:413.60px;top:390px;font-size:8.0px;color:#111;letter-spacing:-0.028px;transform:scaleX(0.92);">New Text Document</span>
<span style="left:560.60px;top:390px;font-size:8.0px;color:#6d6d6d;letter-spacing:-0.264px;transform:scaleX(0.92);">8/30/2016 3:07 PM</span>
<span style="left:633.90px;top:390px;font-size:8.0px;color:#6d6d6d;transform:scaleX(0.92);">Text D</span>
<div style="left:403px;top:388.40999999999997px;width:7.2px;height:9.4px;background:#fdfdfd;border:1px solid #9a9a9a;"></div>
<div style="left:404.4px;top:390.80999999999995px;width:4.2px;height:0.6px;background:#c8c8c8;"></div>
<div style="left:404.4px;top:392.60999999999996px;width:4.2px;height:0.6px;background:#c8c8c8;"></div>
<div style="left:404.4px;top:394.40999999999997px;width:4.2px;height:0.6px;background:#c8c8c8;"></div>
<span style="left:413.60px;top:403px;font-size:8.0px;color:#111;letter-spacing:-0.208px;transform:scaleX(0.92);">Sling</span>
<span style="left:560.60px;top:403px;font-size:8.0px;color:#6d6d6d;letter-spacing:-0.264px;transform:scaleX(0.92);">6/15/2016 5:18 PM</span>
<span style="left:633.90px;top:403px;font-size:8.0px;color:#6d6d6d;transform:scaleX(0.92);">Shortc</span>
<div style="left:402px;top:401.23999999999995px;width:9.6px;height:7.25px;background:#0b0f14;"></div>
<div style="left:406.4px;top:403.63999999999993px;width:3.8px;height:3.6px;background:#2ab0e8;"></div>
<div style="left:402px;top:407.23999999999995px;width:3.6px;height:3.6px;background:#fff;border:0.5px solid #88a;"></div>
<span style="left:413.60px;top:415px;font-size:8.0px;color:#111;letter-spacing:-0.299px;transform:scaleX(0.92);">test 1 2 3</span>
<span style="left:560.60px;top:415px;font-size:8.0px;color:#6d6d6d;letter-spacing:-0.225px;transform:scaleX(0.92);">1/7/2016 4:41 PM</span>
<span style="left:633.90px;top:415px;font-size:8.0px;color:#6d6d6d;transform:scaleX(0.92);">PNG F</span>
<div style="left:402.6px;top:414.46999999999997px;width:8px;height:9px;background:#fff;border:1px solid #7a8fa8;"></div>
<div style="left:404.2px;top:416.46999999999997px;width:4.8px;height:4.2px;background:#2a7fd8;"></div>
<div style="left:402.8px;top:294.2px;width:5px;height:1.4px;background:#f3dc90;"></div>
<div style="left:560.5px;top:294.6px;width:14px;height:0.9px;background:#b5b5b5;"></div>
<div style="left:654.8px;top:278px;width:10px;height:157.8px;background:#f0f0f0;"></div>
<div style="left:654.8px;top:314.5px;width:10px;height:100px;background:#cdcdcd;"></div>
<svg style="left:657.3px;top:281.5px;" width="5" height="4" viewBox="0 0 5 4"><path d="M0.4 3.2 L2.5 0.8 L4.6 3.2" stroke="#333" stroke-width="1" fill="none"/></svg>
<svg style="left:657.3px;top:418.6px;" width="5" height="4" viewBox="0 0 5 4"><path d="M0.4 0.8 L2.5 3.2 L4.6 0.8" stroke="#333" stroke-width="1" fill="none"/></svg>
<div style="left:390px;top:426.2px;width:264.8px;height:9.6px;background:#f0f0f0;"></div>
<div style="left:399px;top:426.2px;width:176px;height:9.6px;background:#cdcdcd;"></div>
<div style="left:654.8px;top:426.2px;width:10px;height:9.6px;background:#fff;"></div>
<svg style="left:393.5px;top:428.5px;" width="4" height="5" viewBox="0 0 4 5"><path d="M3.2 0.4 L0.8 2.5 L3.2 4.6" stroke="#333" stroke-width="1" fill="none"/></svg>
<svg style="left:647.5px;top:428.5px;" width="4" height="5" viewBox="0 0 4 5"><path d="M0.8 0.4 L3.2 2.5 L0.8 4.6" stroke="#333" stroke-width="1" fill="none"/></svg>
<span style="left:372.00px;top:445px;font-size:8.0px;color:#111;letter-spacing:-0.224px;transform:scaleX(0.92);">File name:</span>
<div style="left:408px;top:442px;width:123.5px;height:14px;background:#fff;border:1px solid #7a7a7a;"></div>
<span style="left:410.80px;top:445px;font-size:8.0px;color:#111;letter-spacing:-0.335px;transform:scaleX(0.92);">test 1 2 3</span>
<svg style="left:523.5px;top:447.5px;" width="5" height="4" viewBox="0 0 5 4"><path d="M0.4 0.6 L2.5 3 L4.6 0.6" stroke="#444" stroke-width="0.9" fill="none"/></svg>
<div style="left:539.2px;top:442px;width:115px;height:14px;background:#e1e1e1;border:1px solid #adadad;"></div>
<span style="left:542.00px;top:445px;font-size:8.0px;color:#111;letter-spacing:-0.240px;transform:scaleX(0.92);">All Files</span>
<svg style="left:646px;top:447.5px;" width="5" height="4" viewBox="0 0 5 4"><path d="M0.4 0.6 L2.5 3 L4.6 0.6" stroke="#444" stroke-width="0.9" fill="none"/></svg>
<div style="left:540px;top:460.2px;width:52.5px;height:14.6px;background:#e1e1e1;border:1px solid #0078d7;box-shadow:inset 0 0 0 1px #8fc3ee;"></div>
<div style="left:583px;top:462.6px;width:1px;height:10px;background:#555;"></div>
<svg style="left:585.3px;top:466px;" width="5" height="3.4" viewBox="0 0 5 3.4"><path d="M0 0 H5 L2.5 3.2 Z" fill="#111"/></svg>
<span style="left:553.00px;top:464px;font-size:8.0px;color:#111;letter-spacing:-0.146px;transform:scaleX(0.92);">Open</span>
<div style="left:601.2px;top:460.2px;width:52.8px;height:14.6px;background:#e1e1e1;border:1px solid #adadad;"></div>
<span style="left:616.70px;top:464px;font-size:8.0px;color:#111;letter-spacing:-0.241px;transform:scaleX(0.92);">Cancel</span>
<div style="left:661.5px;top:479.5px;width:1px;height:1px;background:#b0b0b0;"></div>
<div style="left:659.5px;top:479.5px;width:1px;height:1px;background:#b0b0b0;"></div>
<div style="left:661.5px;top:477.5px;width:1px;height:1px;background:#b0b0b0;"></div>
<div style="left:657.5px;top:479.5px;width:1px;height:1px;background:#b0b0b0;"></div>
<div style="left:661.5px;top:475.5px;width:1px;height:1px;background:#b0b0b0;"></div>
<div style="left:659.5px;top:477.5px;width:1px;height:1px;background:#b0b0b0;"></div>
<div style="left:335px;top:128px;width:161.3px;height:45.3px;background:#ffff3e;mix-blend-mode:multiply;"></div>
<div style="left:369.7px;top:435.8px;width:115.2px;height:27.6px;background:#ffff3e;mix-blend-mode:multiply;"></div>
</div></body></html>
